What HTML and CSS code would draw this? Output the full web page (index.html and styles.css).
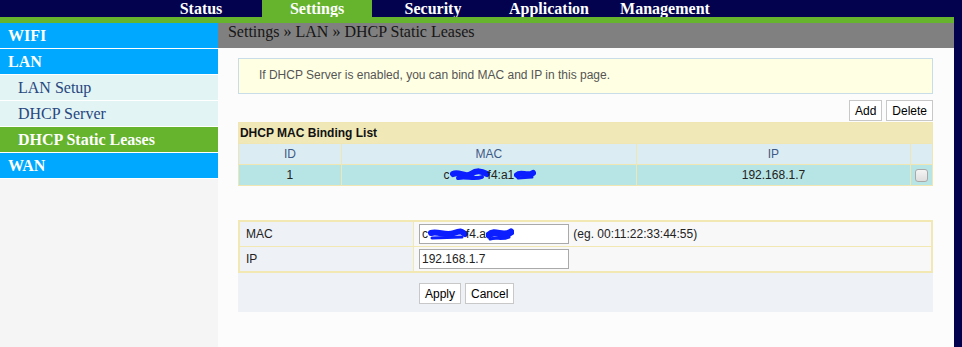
FILE: index.html
```html
<!DOCTYPE html>
<html lang="en">
<head>
  <meta charset="UTF-8" />
  <title>DHCP Static Leases</title>
  <link rel="stylesheet" href="styles.css">
</head>
<body>
<div class="page">
  <div class="topnav">
    <ul class="menu">
      <li>Status</li>
      <li class="active">Settings</li>
      <li>Security</li>
      <li>Application</li>
      <li>Management</li>
    </ul>
  </div>
  <div class="band"></div>

  <div class="layout">
    <div class="sidebar">
      <div class="group">WIFI</div>
      <div class="group">LAN</div>
      <div class="item">LAN Setup</div>
      <div class="item">DHCP Server</div>
      <div class="item current">DHCP Static Leases</div>
      <div class="group">WAN</div>
    </div>

    <div class="main">
      <div class="crumb">Settings &raquo; LAN &raquo; DHCP Static Leases</div>
      <div class="content">
        <div class="notice">If DHCP Server is enabled, you can bind MAC and IP in this page.</div>

        <div class="toolbar">
          <button class="btn">Add</button>
          <button class="btn">Delete</button>
        </div>

        <table class="list">
          <colgroup>
            <col class="c-id">
            <col class="c-mac">
            <col class="c-ip">
            <col class="c-chk">
          </colgroup>
          <tr class="title"><td colspan="4">DHCP MAC Binding List</td></tr>
          <tr class="head">
            <td>ID</td>
            <td>MAC</td>
            <td>IP</td>
            <td></td>
          </tr>
          <tr class="row">
            <td>1</td>
            <td>c<svg class="blot" width="40" height="14" viewBox="0 0 40 14"><path d="M3 6 C9 3 15 10 21 6 S 31 3 37 6" stroke="#0a1eff" stroke-width="6" fill="none" stroke-linecap="round"/><path d="M8 10 C16 8 24 12 32 9" stroke="#0a1eff" stroke-width="4" fill="none" stroke-linecap="round"/></svg>f4:a1<svg class="blot" width="22" height="12" viewBox="0 0 22 12"><path d="M3 6 C7 2 13 8 19 4" stroke="#0a1eff" stroke-width="6" fill="none" stroke-linecap="round"/><path d="M4 9 L18 8" stroke="#0a1eff" stroke-width="3" stroke-linecap="round"/></svg></td>
            <td>192.168.1.7</td>
            <td><span class="check"></span></td>
          </tr>
        </table>

        <div class="form">
          <table class="fields">
            <tr>
              <td class="label">MAC</td>
              <td class="value">
                <span class="input">c<svg class="blot" width="40" height="14" viewBox="0 0 40 14"><path d="M3 5 C10 3 18 8 26 5 S 34 4 37 6" stroke="#0a1eff" stroke-width="6" fill="none" stroke-linecap="round"/><path d="M4 10 L34 9" stroke="#0a1eff" stroke-width="3" stroke-linecap="round"/></svg>f4.a<svg class="blot" width="28" height="16" viewBox="0 0 28 16"><path d="M3 8 C9 2 17 11 25 5" stroke="#0a1eff" stroke-width="7" fill="none" stroke-linecap="round"/><path d="M4 12 C10 10 16 13 23 10" stroke="#0a1eff" stroke-width="3" fill="none" stroke-linecap="round"/></svg></span>
                <span class="hint">(eg. 00:11:22:33:44:55)</span>
              </td>
            </tr>
            <tr>
              <td class="label">IP</td>
              <td class="value"><span class="input">192.168.1.7</span></td>
            </tr>
          </table>
          <div class="actions">
            <button class="btn">Apply</button>
            <button class="btn">Cancel</button>
          </div>
        </div>
      </div>
    </div>
  </div>
</div>
</body>
</html>
```

FILE: styles.css
```css
body {
  margin: 0;
  background: #03024f;
  font-family: "Liberation Sans", Arial, sans-serif;
}
.page {
  width: 954px;
  height: 347px;
  display: flex;
  flex-direction: column;
}
.topnav {
  height: 17px;
  background: #03024f;
}
.menu {
  list-style: none;
  margin: 0;
  padding: 0 0 0 146px;
  display: flex;
  gap: 6px;
}
.menu li {
  width: 110px;
  text-align: center;
  line-height: 15px;
  height: 17px;
  font: bold 16px "Liberation Serif", "Times New Roman", serif;
  color: #fff;
}
.menu li.active {
  background: #66b32e;
}
.band {
  height: 6px;
  background: #66b32e;
}
.layout {
  flex: 1;
  display: flex;
}
.sidebar {
  width: 219px;
  background: #f5f5f5;
  font-family: "Liberation Serif", "Times New Roman", serif;
  font-size: 16px;
}
.group, .item {
  height: 25px;
  line-height: 25px;
  border-bottom: 1px solid #fff;
}
.group {
  background: #00a8ff;
  color: #fff;
  font-weight: bold;
  padding-left: 8px;
}
.item {
  background: #e2f4f4;
  color: #27477f;
  padding-left: 18px;
}
.item.current {
  background: #66b32e;
  color: #fff;
  font-weight: bold;
}
.main {
  flex: 1;
  background: #fcfcfc;
}
.crumb {
  height: 25px;
  line-height: 25px;
  background: #808080;
  color: #161616;
  padding-left: 10px;
  font: 16px "Liberation Serif", "Times New Roman", serif;
}
.content {
  padding: 10px 21px 0 20px;
  font-size: 12px;
}
.notice {
  height: 36px;
  box-sizing: border-box;
  border: 1px solid #c9dde8;
  background: #ffffe3;
  color: #555;
  line-height: 33px;
  padding-left: 20px;
}
.toolbar {
  display: flex;
  justify-content: flex-end;
  gap: 4px;
  margin-top: 6px;
  height: 21px;
}
.btn {
  height: 21px;
  padding: 0 5px;
  background: #fff;
  border: 1px solid #c8c8c8;
  font: 12px "Liberation Sans", Arial, sans-serif;
  color: #000;
}
.list {
  width: 694px;
  margin-top: 1px;
  border-collapse: collapse;
  table-layout: fixed;
}
.list td {
  border: 1px solid #f0e6b4;
  height: 20px;
  padding: 0;
  text-align: center;
  color: #222;
}
.list .title td {
  background: #f0e8b6;
  text-align: left;
  font-weight: bold;
  color: #111;
  padding-left: 1px;
}
.list .head td {
  background: #dcecf3;
  color: #3d5b86;
}
.list .row td {
  background: #b7e4e4;
}
.c-id { width: 103px; }
.c-mac { width: 295px; }
.c-ip { width: 274px; }
.c-chk { width: 22px; }
.check {
  display: inline-block;
  width: 11px;
  height: 11px;
  border: 1px solid #a8a8a8;
  border-radius: 3px;
  background: linear-gradient(#f4f4f4, #dedede);
  vertical-align: middle;
}
.blot {
  vertical-align: middle;
  margin: 0 -2px 0 0;
}
.form {
  margin-top: 34px;
  width: 695px;
}
.fields {
  width: 100%;
  border-collapse: collapse;
  border: 2px solid #f2e8b4;
}
.fields td {
  border: 1px solid #f2e8b4;
  height: 24px;
  padding: 0;
  color: #222;
}
.fields .label {
  width: 167px;
  background: #eef1f5;
  padding-left: 6px;
}
.fields .value {
  background: #f8f8f8;
  padding-left: 5px;
}
.input {
  display: inline-block;
  width: 146px;
  height: 18px;
  line-height: 18px;
  border: 1px solid #aaa;
  background: #fff;
  padding-left: 2px;
  vertical-align: middle;
  overflow: hidden;
  white-space: nowrap;
}
.hint {
  margin-left: 1px;
  vertical-align: middle;
}
.actions {
  background: #eef1f5;
  height: 39px;
  box-sizing: border-box;
  padding: 10px 0 0 181px;
  display: flex;
  gap: 4px;
}
```
